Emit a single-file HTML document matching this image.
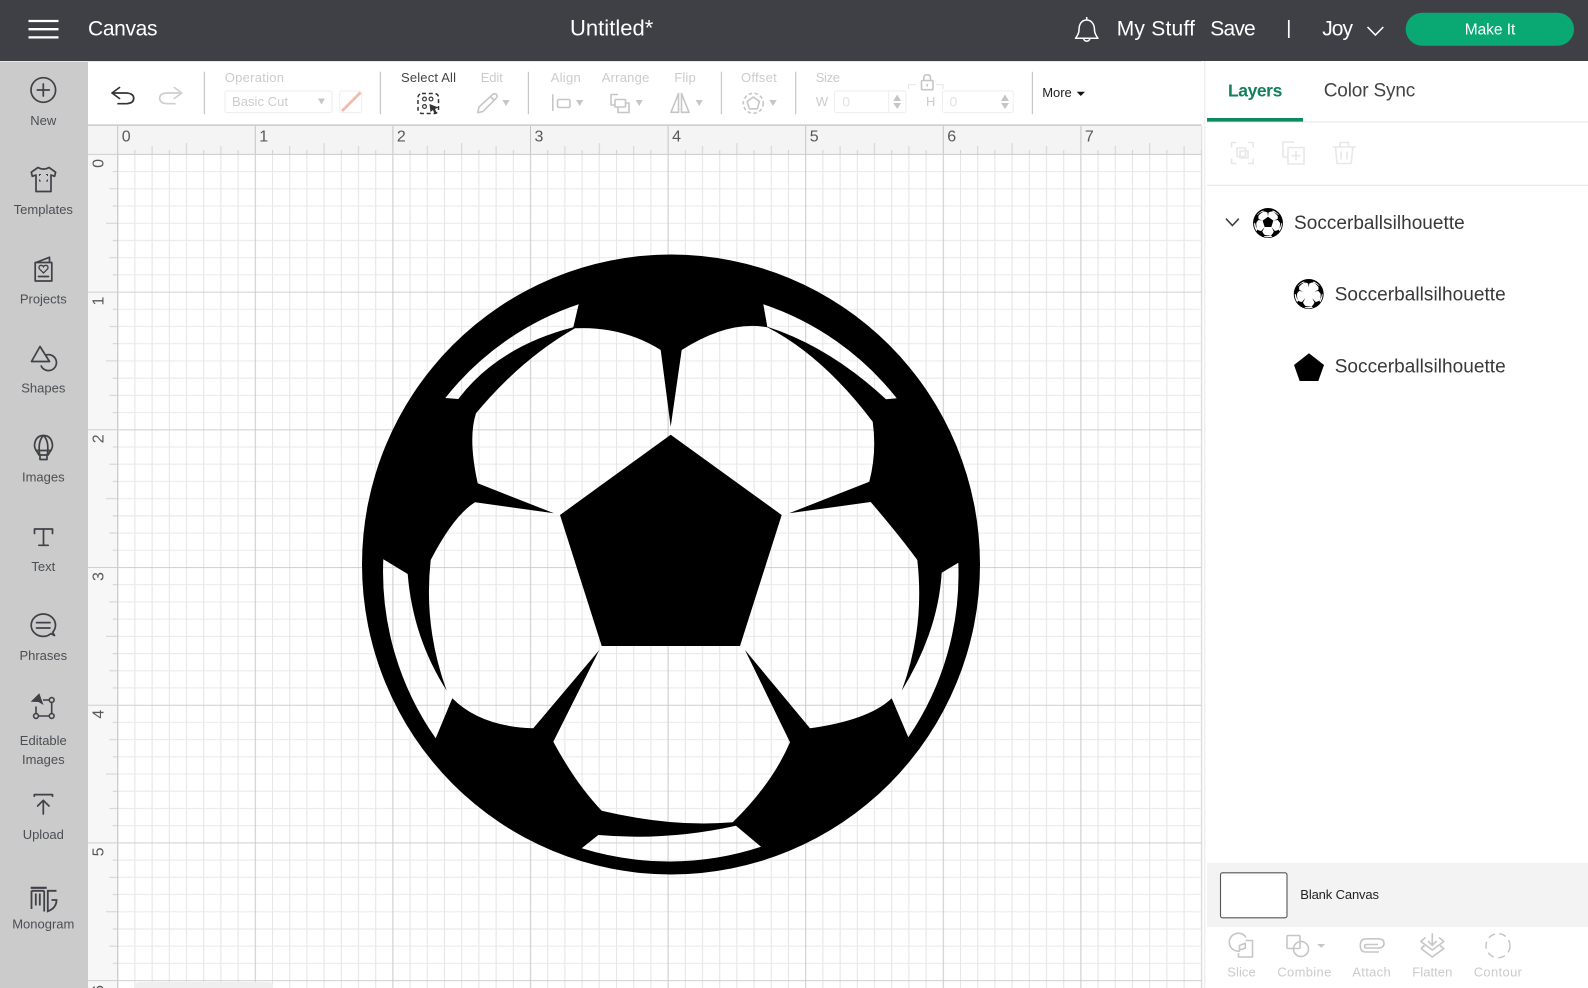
<!DOCTYPE html>
<html lang="en"><head><meta charset="utf-8"><title>Canvas</title>
<style>
html,body{margin:0;padding:0;background:#fff;width:1588px;height:988px;overflow:hidden}
svg{display:block;position:absolute;left:0;top:0}
text{font-family:"Liberation Sans",sans-serif}
.h{fill:#fff;font-size:21px}
.s{fill:#4b4f54;font-size:13px;text-anchor:middle}
.d{fill:#cbcbcb;font-size:13px}
.r{fill:#585858;font-size:16px}
.l{fill:#383838;font-size:19px}
.ic{fill:none;stroke:#3f4147;stroke-width:1.7;stroke-linecap:round;stroke-linejoin:round}
.g{fill:none;stroke:#c6c6c6;stroke-width:1.6;stroke-linejoin:round}
.e{fill:none;stroke:#e8e8e8;stroke-width:1.6;stroke-linejoin:round}
.a{fill:#c6c6c6}
</style></head><body>
<svg width="1588" height="988" viewBox="0 0 1588 988" xmlns="http://www.w3.org/2000/svg">
<defs>
<pattern id="grid" patternUnits="userSpaceOnUse" x="117" y="154" width="137.6" height="137.7">
<path d="M17.9 0V138M35.1 0V138M52.3 0V138M69.5 0V138M86.7 0V138M103.9 0V138M121.1 0V138" stroke="#e4e4e4" stroke-width="1" fill="none"/>
<path d="M0 17.6H138M0 34.8H138M0 52H138M0 69.2H138M0 86.5H138M0 103.7H138M0 120.9H138" stroke="#e9e9e9" stroke-width="1" fill="none"/>
<path d="M.7 0V138M0 .4H138" stroke="#c9c9c9" stroke-width="1" fill="none"/>
</pattern>
<pattern id="tickT" patternUnits="userSpaceOnUse" x="117" y="125" width="137.6" height="29.5">
<path d="M17.9 25V30M35.1 21V30M52.3 25V30M69.5 18V30M86.7 25V30M103.9 21V30M121.1 25V30" stroke="#d2d2d2" stroke-width="1" fill="none"/>
</pattern>
<pattern id="tickL" patternUnits="userSpaceOnUse" x="88" y="154" width="30" height="137.7">
<path d="M24.7 17.6H30M21.3 34.8H30M24.7 52H30M18 69.2H30M24.7 86.5H30M21.3 103.7H30M24.7 120.9H30" stroke="#d2d2d2" stroke-width="1" fill="none"/>
</pattern>
<path id="ballb" fill="#000" fill-rule="evenodd" d="M362,564.5 A309,310 0 1 1 980,564.5 A309,310 0 1 1 362,564.5 Z
M575,328.3 Q622,326 660.7,350 L670.7,426.7 L681.7,350 Q729,320 767.3,327.3 Q823,356 872.7,421.7 Q877,452 869.3,481.7 L789,513.3 L870.7,502 Q899,535 917.3,560 Q925,628 901.7,690.7 Q938,632 941.7,572.7 L958.3,562.7 A290,290 0 0 1 908.3,737.3 L891.7,698.3 Q869,720 810,728.3 L745,650 L790,742.3 Q772,784 732.7,822.3 Q672.8,827.5 601.7,810.7 Q575.9,783.8 553.3,741.7 L599.3,650 L533.3,728.3 Q480.6,726.7 452.3,698.3 L435.7,738.3 A290,290 0 0 1 383.3,559.3 L407.7,574 Q412.8,637.6 446.7,690.7 Q423.3,626.7 430.7,560 Q453.75,515.5 475,502.3 L554,513.3 L477.7,483.3 Q467.8,438.3 476,413.3 Q521,359.2 575,328.3 Z
M445.3,398 L458.3,399 Q497.6,346.85 573.3,327.3 L578.7,304.3 A285,285 0 0 0 445.3,398 Z
M763.3,304.3 L767.3,326.7 Q830,347 886,399.3 L896.7,398.3 A285,285 0 0 0 763.3,304.3 Z
M598.3,835 Q667,841 736,825.7 L761,846.7 A295,295 0 0 1 581.7,848.3 Z"/>
<polygon id="pent" fill="#000" points="670.7,434.7 781.7,515 740,646 601.7,646 560,515"/>
</defs>

<!-- canvas -->
<rect x="88" y="125" width="1113.5" height="863" fill="#fff"/>
<rect x="118" y="154" width="1083.5" height="834" fill="url(#grid)"/>
<rect x="88" y="125" width="1113.5" height="29.3" fill="#f4f4f4"/>
<rect x="88" y="154" width="29.7" height="834" fill="#f7f7f7"/>
<rect x="117" y="125" width="1084.5" height="29.5" fill="url(#tickT)"/>
<rect x="88" y="154" width="30" height="834" fill="url(#tickL)"/>
<path d="M117.7 125V988M255.3 125V154M392.9 125V154M530.5 125V154M668.1 125V154M805.7 125V154M943.3 125V154M1080.9 125V154" stroke="#c4c4c4" stroke-width="1" fill="none"/>
<path d="M88 154.4H1201M88 292.1H118M88 429.8H118M88 567.5H118M88 705.2H118M88 842.9H118M88 980.6H118" stroke="#cfcfcf" stroke-width="1" fill="none"/>
<g>
<text class="r" x="121.7" y="141.6">0</text><text class="r" x="259.3" y="141.6">1</text><text class="r" x="396.9" y="141.6">2</text><text class="r" x="534.5" y="141.6">3</text><text class="r" x="672.1" y="141.6">4</text><text class="r" x="809.7" y="141.6">5</text><text class="r" x="947.3" y="141.6">6</text><text class="r" x="1084.9" y="141.6">7</text>
</g>
<g>
<text class="r" style="text-anchor:middle" transform="translate(103.5,163.4) rotate(-90)">0</text>
<text class="r" style="text-anchor:middle" transform="translate(103.5,301.1) rotate(-90)">1</text>
<text class="r" style="text-anchor:middle" transform="translate(103.5,438.8) rotate(-90)">2</text>
<text class="r" style="text-anchor:middle" transform="translate(103.5,576.5) rotate(-90)">3</text>
<text class="r" style="text-anchor:middle" transform="translate(103.5,714.2) rotate(-90)">4</text>
<text class="r" style="text-anchor:middle" transform="translate(103.5,851.9) rotate(-90)">5</text>
<text class="r" style="text-anchor:middle" transform="translate(103.5,989.6) rotate(-90)">6</text>
</g>
<path d="M135 988V986Q135 982 140 982H268Q273 982 273 986V988Z" fill="#efefef"/>

<!-- soccer ball -->
<use href="#ballb"/><use href="#pent"/>

<!-- header -->
<rect width="1588" height="61" fill="#3e4046"/>
<path d="M28.5 21H58.5M28.5 29.2H58.5M28.5 37.4H58.5" stroke="#fff" stroke-width="2.3" fill="none"/>
<text class="h" x="88" y="35.7" textLength="69.5">Canvas</text>
<text class="h" style="font-size:22px" x="570" y="35.7" textLength="83.3">Untitled*</text>
<path d="M1086.7 20C1081 20 1079 25 1079 30C1079 34 1077 36 1075.5 38.3H1098C1096.5 36 1094.5 34 1094.5 30C1094.5 25 1092 20 1086.7 20ZM1086.7 20V17M1083.6 38.5a3.2 3.2 0 0 0 6.3 0" fill="none" stroke="#fff" stroke-width="1.5" stroke-linejoin="round"/>
<text class="h" x="1116.7" y="35.7" textLength="78.3">My Stuff</text>
<text class="h" x="1210.3" y="35.7" textLength="45.4">Save</text>
<path d="M1288.8 20V38" stroke="#fff" stroke-width="1.7"/>
<text class="h" x="1322.3" y="35.7" textLength="30.7">Joy</text>
<path d="M1367.5 27L1375.4 35L1383.3 27" fill="none" stroke="#fff" stroke-width="1.6"/>
<rect x="1405.7" y="12.7" width="168.3" height="33" rx="16.5" fill="#0aa974"/>
<text x="1464.7" y="34.7" textLength="50.6" style="font-size:15.5px;fill:#fff">Make It</text>

<!-- sidebar -->
<rect y="61" width="88" height="927" fill="#cbcbcb"/>
<circle class="ic" cx="43.3" cy="90" r="12.3"/><path class="ic" d="M37.3 90H49.3M43.3 84V96"/>
<text class="s" x="43.3" y="125">New</text>
<path class="ic" d="M38 167.5Q43.5 170.8 49 167.5L55.6 172.2L54.6 176.3L51 175V191.5H36V175L32.3 176.3L31.3 172.2Z"/>
<path d="M41 174.5h-1.5v1.5M46 174.5h1.5v1.5M41 181h-1.5v-1.5M46 181h1.5v-1.5" fill="none" stroke="#3f4147" stroke-width="1"/>
<text class="s" x="43.3" y="214.2">Templates</text>
<path class="ic" d="M35.2 262.5H51.8V281H35.2ZM36 262.5L49.5 257.3V262.5M38.5 276.5H48.5"/>
<path d="M43.5 273L39.3 268.8Q38.3 265.5 41 265.3Q42.8 265.3 43.5 266.7Q44.2 265.3 46 265.3Q48.7 265.5 47.7 268.8Z" fill="none" stroke="#3f4147" stroke-width="1.3"/>
<text class="s" x="43.3" y="303.4">Projects</text>
<path class="ic" d="M40 346.5L31.5 361.5H49.5ZM41.2 366A8 8 0 1 0 46 355"/>
<text class="s" x="43.3" y="392.5">Shapes</text>
<path class="ic" d="M39 455L35.6 449.5Q34 446.5 34.8 443Q36.5 435.5 43.5 435.5Q50.5 435.5 52.2 443Q53 446.5 51.4 449.5L48 455ZM39.7 455Q37.6 441 43.5 435.5Q49.4 441 47.3 455M40 455V459.5H47V455M36 450.5H51"/>
<text class="s" x="43.3" y="481.6">Images</text>
<path class="ic" d="M34.5 533.5V529H52.5V533.5M43.5 529V545.3M38.8 545.3H48.2"/>
<text class="s" x="43.3" y="570.8">Text</text>
<path class="ic" d="M54.5 635.5L50.8 633.6Q47.5 636.4 43.3 636.4C36.5 636.4 31.2 631.5 31.2 625.3C31.2 619 36.5 614 43.3 614C50 614 55.5 619 55.5 625.3Q55.5 629 52.7 632.3Z"/>
<path class="ic" d="M36.5 622.6H50M36.5 628H50"/>
<text class="s" x="43.3" y="660">Phrases</text>
<polygon points="30.7,701.7 39.3,693.3 43.5,705 38.5,702" fill="#3f4147"/>
<g fill="none" stroke="#3f4147" stroke-width="1.6"><circle cx="51.7" cy="700" r="2.4"/><circle cx="51.7" cy="716" r="2.4"/><circle cx="36" cy="716" r="2.4"/><path d="M43 700H49.3M51.7 702.4V713.6M38.4 716H49.3M36 713.6V706.5"/></g>
<text class="s" x="43.3" y="745">Editable</text>
<text class="s" x="43.3" y="764.2">Images</text>
<path class="ic" d="M34.3 796.3V794.6H52.5V796.3M43.3 814V800.3M37.6 806L43.3 800.3L49 806"/>
<text class="s" x="43.3" y="839">Upload</text>
<path d="M30.7 887.8H46.7" stroke="#3f4147" stroke-width="2.2" fill="none"/>
<path d="M31.5 890.8H44.2M31.5 890.8V909M35.8 893.5V905.5M39.8 893.5V905.5M44.2 890.8V911.5M56.5 890.8H47.8V911.3Q56.5 908 56.5 900H51.5" fill="none" stroke="#3f4147" stroke-width="1.8"/>
<text class="s" x="43.3" y="928.3">Monogram</text>

<!-- toolbar -->
<rect x="88" y="61" width="1116" height="63.5" fill="#fff"/>
<rect x="0" y="61" width="1588" height="1" fill="#e6e6e6"/>
<rect x="88" y="124.3" width="1113.5" height="1.7" fill="#cfcfcf"/>
<path d="M204.4 71.7V114.3M380.4 71.7V114.3M528.4 71.7V114.3M721.4 71.7V114.3M795.7 71.7V114.3M1032.4 71.7V114.3" stroke="#c9c9c9" stroke-width="1.3"/>
<path d="M119.5 87.5L112 93L119.5 98.5M112 93H125.5Q133.7 93 133.7 98.3Q133.7 103.7 125.5 103.7H118" fill="none" stroke="#333" stroke-width="1.7" stroke-linecap="round" stroke-linejoin="round"/>
<path d="M174.3 87.5L181.8 93L174.3 98.5M181.8 93H168Q159.7 93 159.7 98.3Q159.7 103.7 168 103.7H175" fill="none" stroke="#cfcfcf" stroke-width="1.7" stroke-linecap="round" stroke-linejoin="round"/>
<text class="d" x="224.7" y="82" textLength="59.3">Operation</text>
<rect x="225" y="91" width="107" height="21.5" rx="2" fill="#fff" stroke="#eee"/>
<text class="d" x="232" y="106" textLength="56">Basic Cut</text>
<polygon class="a" points="318,98.5 325,98.5 321.5,104.5"/>
<rect x="339.7" y="91" width="22" height="21.5" rx="2" fill="#fff" stroke="#eee"/>
<path d="M342 111L360.5 92.5" stroke="#f2b9ac" stroke-width="2.8"/>
<text x="401" y="82" textLength="55" style="font-size:13px;fill:#444">Select All</text>
<rect x="418" y="93.5" width="20.5" height="20" rx="4" fill="none" stroke="#333" stroke-width="1.5" stroke-dasharray="4 2.8"/>
<g fill="none" stroke="#333" stroke-width="1.2"><circle cx="424.5" cy="99" r="1.9"/><circle cx="431" cy="99" r="1.9"/><circle cx="424.5" cy="106.5" r="1.9"/></g>
<polygon fill="#333" points="429.5,104 438.5,107.5 435,109 436.8,113 434.5,113.8 433,110 430.5,112"/>
<text class="d" x="480.7" y="82" textLength="22">Edit</text>
<path class="g" d="M479 107L493 94.2Q495 93 496.5 94.5Q497.8 96 496.5 97.8L483 111.5L477.8 112.7ZM490.5 96.5L494.5 100.5"/>
<polygon class="a" points="502.3,100 509.7,100 506,106"/>
<text class="d" x="550.7" y="82" textLength="30">Align</text>
<path class="g" d="M552.8 94.3V111"/><rect class="g" x="557.5" y="99.5" width="12.5" height="8" rx="1.5"/>
<polygon class="a" points="576,100 583.3,100 579.7,106"/>
<text class="d" x="601.7" y="82" textLength="47.6">Arrange</text>
<path class="g" d="M618 94.5H611V105H615M615 99.5H625.5V107M615 99.5V107H625.5M618 107V112.5H629V103H625.5"/>
<polygon class="a" points="635.7,100 642.7,100 639.2,106"/>
<text class="d" x="674.3" y="82" textLength="21.4">Flip</text>
<path class="g" d="M678.5 93.5V112.3H671ZM681.5 93.5V112.3H689Z"/>
<polygon class="a" points="695.7,100 702.7,100 699.2,106"/>
<text class="d" x="741" y="82" textLength="35.7">Offset</text>
<circle class="g" cx="753.3" cy="103.3" r="10" stroke-dasharray="3.5 2.5"/>
<polygon class="g" points="753.3,97 759.5,101.5 757.2,108.8 749.4,108.8 747.1,101.5"/>
<polygon class="a" points="769.3,100 776.7,100 773,106"/>
<text class="d" x="815.7" y="82" textLength="24.3">Size</text>
<text class="d" x="815.7" y="106" textLength="11.5">W</text>
<rect x="834.5" y="91" width="71.5" height="21.5" rx="2" fill="#fff" stroke="#eee"/>
<path d="M888.4 91V112.5M997 91V112.5" stroke="#eee"/>
<text x="842.3" y="106.5" style="font-size:14px;fill:#e3e3e3">0</text>
<polygon class="a" points="893.3,101 901,101 897.2,94.5"/><polygon class="a" points="893.3,103 901,103 897.2,109"/>
<path d="M908.6 89V84.6H916M936 84.6H943V89" fill="none" stroke="#e6e6e6" stroke-width="1"/>
<rect class="g" x="921.5" y="80.5" width="11.5" height="9.2" rx="1"/>
<path class="g" d="M923.8 80.5V77.8Q923.8 74.7 927.2 74.7Q930.5 74.7 930.5 77.8V80.5M927.2 84V86.5"/>
<text class="d" x="926" y="106" textLength="9.5">H</text>
<rect x="942.5" y="91" width="70.8" height="21.5" rx="2" fill="#fff" stroke="#eee"/>
<text x="949.5" y="106.5" style="font-size:14px;fill:#e3e3e3">0</text>
<polygon class="a" points="1001,101 1009,101 1005,94.5"/><polygon class="a" points="1001,103 1009,103 1005,109"/>
<text x="1042.3" y="97" textLength="29.4" style="font-size:13px;fill:#222">More</text>
<polygon fill="#111" points="1076.7,91.7 1085,91.7 1080.8,96"/>

<!-- right panel -->
<rect x="1201.5" y="61" width="386.5" height="927" fill="#fff"/>
<rect x="1204.3" y="61" width="1" height="927" fill="#e6e6e6"/>
<rect x="1201.3" y="126" width="1" height="862" fill="#d9d9d9"/>
<rect x="1207" y="121.5" width="381" height="1" fill="#e6e6e6"/>
<rect x="1207" y="118" width="96" height="3.6" fill="#0b8a60"/>
<text x="1228" y="96.7" textLength="54.3" style="font-size:17.5px;font-weight:bold;fill:#12815a">Layers</text>
<text x="1323.7" y="96.7" textLength="91.6" style="font-size:19px;fill:#444">Color Sync</text>
<path class="e" d="M1231.5 147.5V142.5H1236.5M1248 142.5H1253.2V147.5M1231.5 158.5V163.5H1236.5M1248 163.5H1253.2V158.5"/>
<rect class="e" x="1237" y="148" width="8.5" height="8.5"/><rect class="e" x="1240" y="151" width="8" height="7"/>
<path class="e" d="M1294 142H1283V157H1288M1288 147.5H1304V164H1288ZM1296 151V160M1291.5 155.7H1300.5"/>
<path class="e" d="M1332.8 147H1355.8M1340 147V142.5H1348.5V147M1335.5 147L1337 163.5H1351.2L1352.8 147M1341 151.5V159.5M1347 151.5V159.5"/>
<rect x="1207" y="184.8" width="381" height="1" fill="#e2e2e2"/>
<path d="M1226 218.7L1232.4 225.5L1238.8 218.7" fill="none" stroke="#3a3a3a" stroke-width="1.5"/>
<g transform="translate(1268,223) scale(.0484) translate(-671,-564.5)"><use href="#ballb"/><use href="#pent"/></g>
<text class="l" x="1294" y="229" textLength="170.7">Soccerballsilhouette</text>
<g transform="translate(1308.7,294) scale(.0484) translate(-671,-564.5)"><use href="#ballb"/></g>
<text class="l" x="1334.7" y="300.3" textLength="171">Soccerballsilhouette</text>
<polygon points="1309,353.3 1324,365 1318.3,381 1299.7,381 1294,365" fill="#000"/>
<text class="l" x="1334.7" y="372.7" textLength="171">Soccerballsilhouette</text>

<rect x="1207" y="862.7" width="381" height="64.3" fill="#f3f3f3"/>
<rect x="1220.5" y="872.8" width="66.5" height="45" rx="2" fill="#fff" stroke="#555" stroke-width="1.1"/>
<text x="1300.3" y="899" textLength="78.7" style="font-size:13px;fill:#222">Blank Canvas</text>

<path class="g" d="M1240 951A9 9 0 1 1 1246 937.5M1239.5 945.5L1245.3 943.3V948.2L1239.5 950ZM1245.5 940.5H1252.5V957H1238.5V953"/>
<rect class="g" x="1287" y="935.5" width="13" height="13" rx="1"/><circle class="g" cx="1301" cy="949" r="7.5"/>
<polygon class="a" points="1317,944 1325.3,944 1321.2,947.8"/>
<path class="g" d="M1378 944.5H1366.5Q1364.5 944.5 1364.5 946.2Q1364.5 948 1366.5 948H1378Q1384 948 1384 943.2Q1384 938.8 1378 938.8H1366Q1360.3 938.8 1360.3 945.5Q1360.3 952 1366 952H1379"/>
<path class="g" d="M1432.3 933.3V945M1428 941L1432.3 945.3L1436.6 941M1425.5 937.5L1420.8 941.5L1432.3 950L1443.8 941.5L1439 937.5M1421 948.5L1432.3 957L1443.8 948.5L1440 945.5M1424.5 945.5L1421 948.5"/>
<circle cx="1498" cy="945.7" r="12" fill="none" stroke="#c6c6c6" stroke-width="1.5" stroke-dasharray="7 4.5"/>
<text class="d" x="1227.3" y="976.7" textLength="28.4">Slice</text>
<text class="d" x="1277.3" y="976.7" textLength="54">Combine</text>
<text class="d" x="1352.3" y="976.7" textLength="38.4">Attach</text>
<text class="d" x="1412.3" y="976.7" textLength="40">Flatten</text>
<text class="d" x="1473.7" y="976.7" textLength="48.3">Contour</text>
</svg>
</body></html>
